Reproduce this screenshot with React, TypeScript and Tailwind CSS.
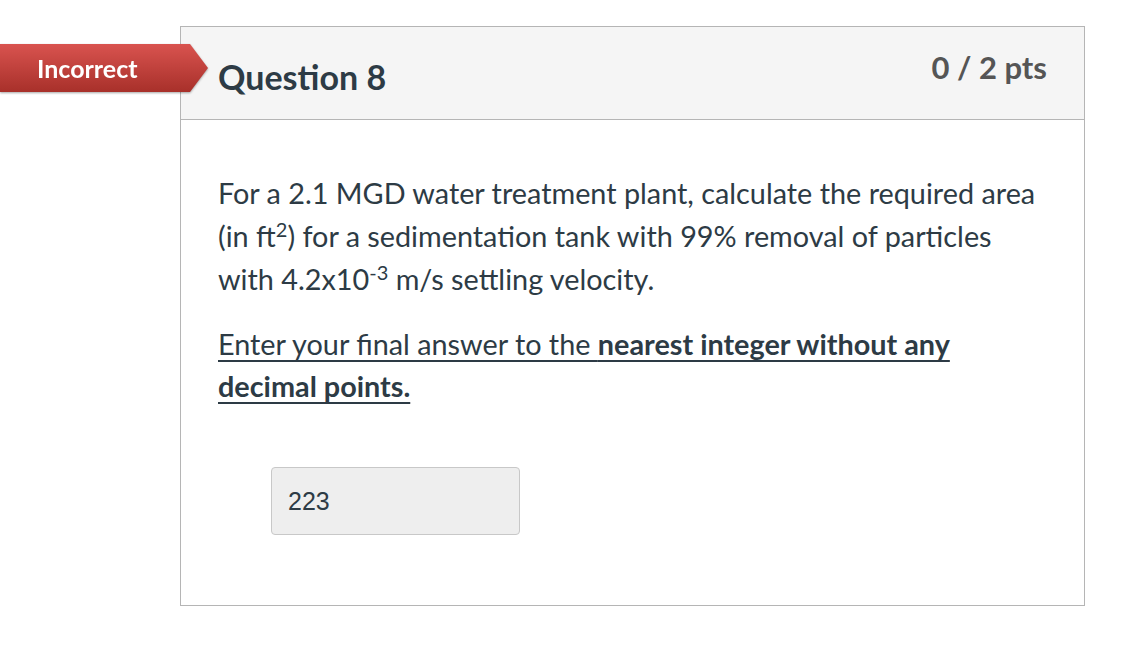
import React from 'react';

const lato = { fontFamily: 'Lato, "Noto Sans", sans-serif' };

export default function App() {
  return (
    <div className="relative w-[1134px] h-[652px] bg-white" style={lato}>
      <div className="absolute left-0 top-[44px] h-[48px] w-[208px] drop-shadow-[0_1px_1px_rgba(0,0,0,0.35)]">
        <div className="w-full h-full bg-gradient-to-b from-[#d9534f] to-[#a8302a] [clip-path:polygon(0_0,190px_0,208px_50%,190px_100%,0_100%)] flex items-center pl-[37px]">
          <span className="text-white text-[25px] font-bold mt-[1px]">Incorrect</span>
        </div>
      </div>

      <div className="pt-[26px] pl-[180px]">
        <div className="w-[905px] border border-[#b5b5b5]">
          <div className="h-[93px] bg-[#f5f5f5] border-b border-[#b5b5b5] flex items-center justify-between pl-[37px] pr-[37px] pt-[6px]">
            <h2 className="text-[34px] font-bold text-[#2d3b45]">Question 8</h2>
            <span className="text-[31px] font-bold text-[#555555] -mt-[18px]">0 / 2 pts</span>
          </div>
          <div className="pl-[37px] pr-[40px] pt-[52px] pb-[70px] text-[28.8px] leading-[43px] text-[#2d3b45]">
            <p className="mb-[22px]">
              For a 2.1 MGD water treatment plant, calculate the required area (in ft
              <sup className="text-[20px]">2</sup>) for a sedimentation tank with 99% removal of particles with 4.2x10
              <sup className="text-[20px]">-3</sup> m/s settling velocity.
            </p>
            <p className="underline decoration-[2px] underline-offset-[5px] leading-[42px]">
              Enter your final answer to the <strong className="font-bold">nearest integer without any decimal points.</strong>
            </p>
            <div className="mt-[60px] ml-[53px] w-[249px] h-[68px] bg-[#eeeeee] border border-[#c8c8c8] rounded-[4px] flex items-center pl-[16px]">
              <span className="text-[25px] text-[#2d3b45]" style={{ fontFamily: '"Liberation Sans", Arial, sans-serif' }}>223</span>
            </div>
          </div>
        </div>
      </div>
    </div>
  );
}
